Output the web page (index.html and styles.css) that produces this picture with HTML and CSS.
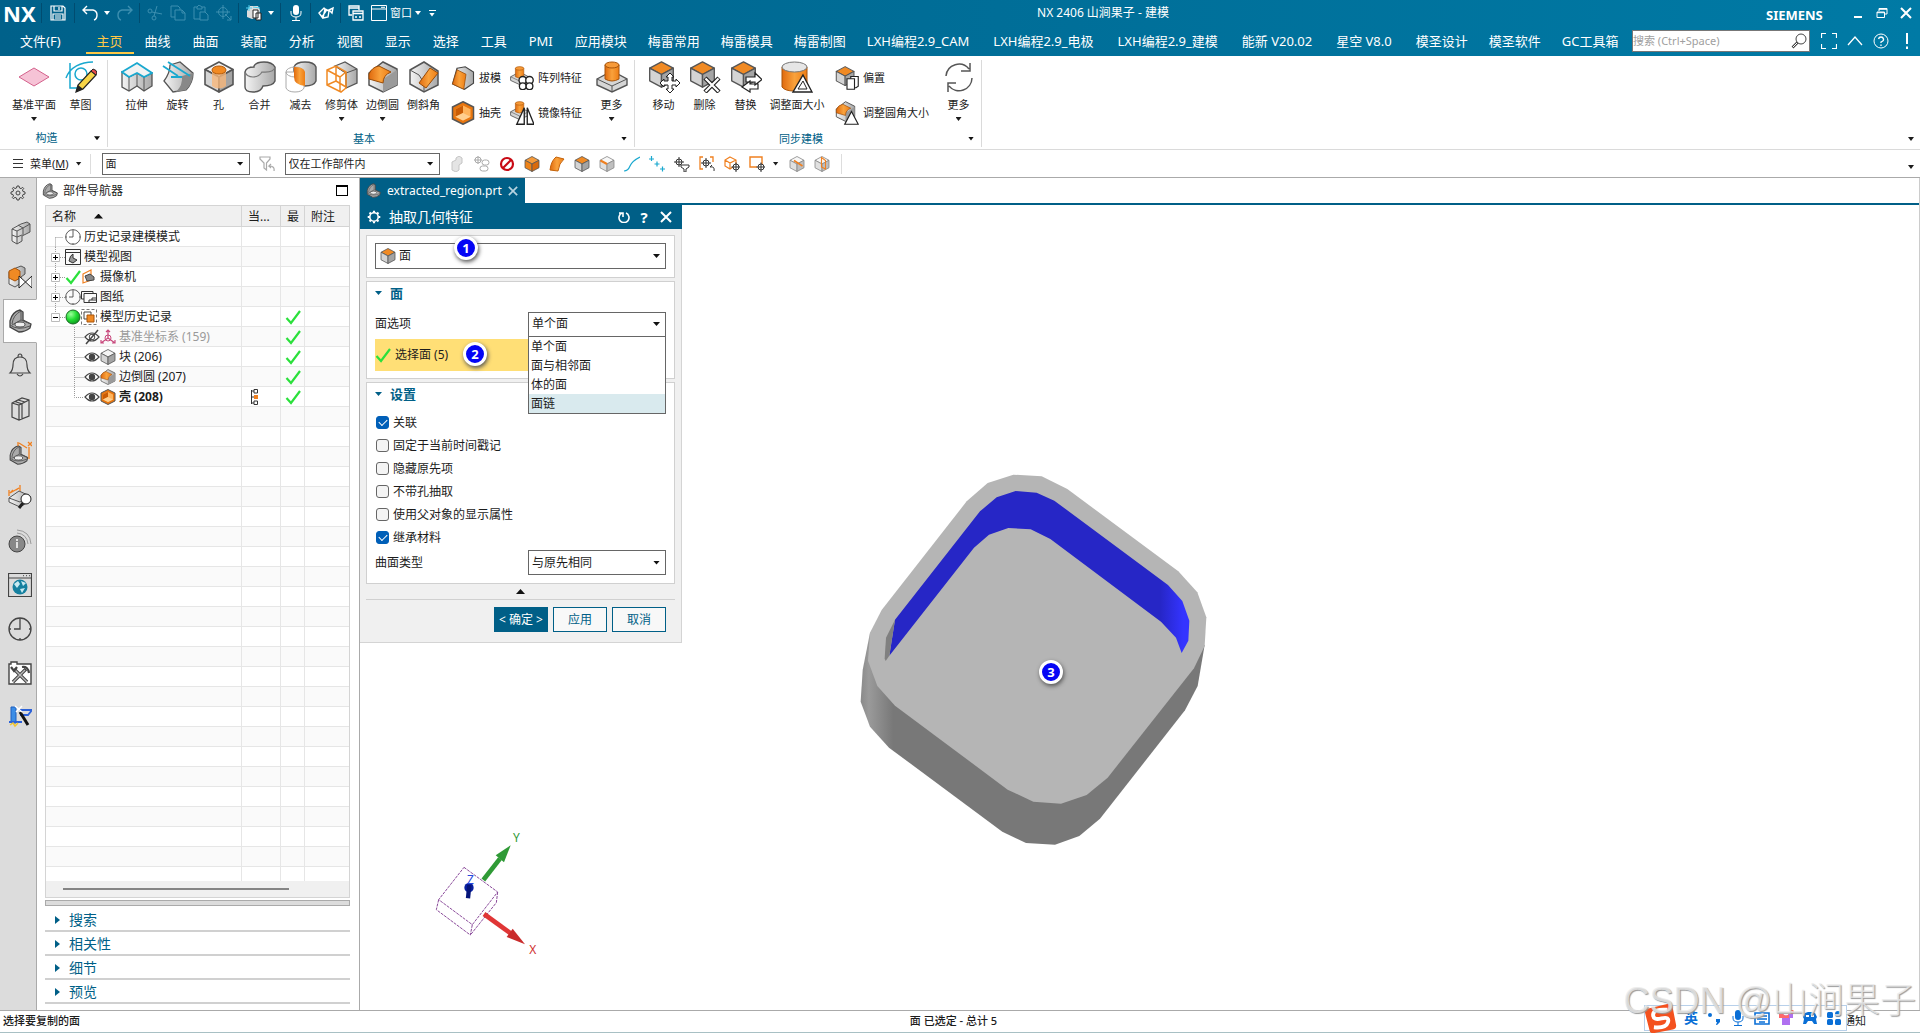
FILE: index.html
```html
<!DOCTYPE html>
<html lang="zh-CN">
<head>
<meta charset="utf-8">
<title>NX 2406 山涧果子 - 建模</title>
<link rel="stylesheet" href="styles.css">
</head>
<body>
<svg class="sprite" aria-hidden="true">
  <defs>
    <linearGradient id="gOr" x1="0" x2="1"><stop offset="0" stop-color="#e06a0e"/><stop offset=".5" stop-color="#f9a23c"/><stop offset="1" stop-color="#ee7d14"/></linearGradient>
    <linearGradient id="gGr" x1="0" x2="1"><stop offset="0" stop-color="#f4f4f4"/><stop offset="1" stop-color="#a8a8a8"/></linearGradient>
    <radialGradient id="gGreen" cx=".35" cy=".3" r=".8"><stop offset="0" stop-color="#9dff9d"/><stop offset=".5" stop-color="#22dd33"/><stop offset="1" stop-color="#0a8c1c"/></radialGradient>
  </defs>

  <symbol id="cube" viewBox="0 0 32 32"><g stroke="#555" stroke-width="1.6" stroke-linejoin="round"><path class="ft" d="M16 1 30 8.500 16 16 2 8.500Z"/><path class="fl" d="M2 8.500 16 16V31L2 23.500Z"/><path class="fr" d="M30 8.500 16 16V31L30 23.500Z"/></g></symbol>

  <symbol id="datum" viewBox="0 0 32 32"><path d="M1 16 16 7 31 16 16 25Z" fill="#f6c3d6" stroke="#d4628c"/></symbol>
  <symbol id="sketch" viewBox="0 0 32 32"><g fill="none" stroke="#19a8cf" stroke-width="1.500"><path d="M5 2V27H16M1 17C5 6 16 1 28 1"/><circle cx="16" cy="13" r="6"/></g><path d="M11 31 13 24 26 10 31 14 18 28Z" fill="#f8d548" stroke="#222" stroke-width="1.200"/><path d="M26 10 28 8Q32 9 32 12L31 14Z" fill="#e64a4a" stroke="#222"/><path d="M11 31 13 24 18 28Z" fill="#222"/></symbol>
  <symbol id="extrude" viewBox="0 0 32 32"><path d="M1 11V26L8 30 16 25 23 30 31 25V12L23 16 16 12 8 16Z" fill="url(#gGr)" stroke="#555" stroke-width="1.300"/><path d="M8 16V30M16 12V25M23 16V30" stroke="#555"/><path d="M1 11 16 2 31 12 23 16 16 12 8 16Z" fill="#f2f2f2" stroke="#19a8cf" stroke-width="1.800"/></symbol>
  <symbol id="revolve" viewBox="0 0 32 32"><path d="M8 4 18 1 31 12Q31 22 24 29L11 31 2 20Q8 12 8 4Z" fill="url(#gGr)" stroke="#555" stroke-width="1.300"/><path d="M14 31Q21 24 20 15L31 12Q31 22 24 29Z" fill="#888"/><path d="M1 5 16 15M6 1 28 15M9 16 20 16" stroke="#19a8cf" stroke-width="1.800"/></symbol>
  <symbol id="hole" viewBox="0 0 32 32"><use href="#cube"/><path d="M9 9V25Q16 30 23 25V9Z" fill="#f6b77a" opacity=".8"/><ellipse cx="16" cy="9" rx="7" ry="4" fill="#f28a22" stroke="#b55a08"/></symbol>
  <symbol id="unite" viewBox="0 0 32 32"><path d="M10 5Q12 1 20 1T31 6V20Q29 25 19 25 17 31 9 31T1 26V11Q2 6 10 6Z" fill="url(#gGr)" stroke="#555" stroke-width="1.400"/><path d="M1 11Q3 16 9 16T18 11Q30 12 31 6" fill="none" stroke="#777" stroke-width="1.200"/></symbol>
  <symbol id="subtract" viewBox="0 0 32 32"><path d="M9 6Q11 1 20 1T31 6V20Q29 25 20 25L9 20Z" fill="url(#gGr)" stroke="#555" stroke-width="1.400"/><path d="M1 11V27Q3 31 10 31T19 27V11Z" fill="#fff" stroke="#aaa"/><ellipse cx="10" cy="11" rx="9" ry="5" fill="none" stroke="#aaa"/><path d="M9 6Q19 6 20 11V25Q9 24 9 16Z" fill="url(#gOr)"/></symbol>
  <symbol id="trim" viewBox="0 0 32 32"><path d="M9 5 19 1 31 8V22L20 27V12Z" fill="url(#gGr)" stroke="#555" stroke-width="1.300"/><path d="M9 5 20 12 31 8" fill="none" stroke="#555"/><path d="M1 9 10 5 20 11V27L15 31 1 24ZM1 9 14 16V31M14 16 20 11M10 5V20L1 24M10 20 20 26" fill="none" stroke="#f08a24" stroke-width="1.500"/></symbol>
  <symbol id="blend" viewBox="0 0 32 32"><path d="M2 12 16 1 30 8V24L16 31 2 24Z" fill="url(#gGr)" stroke="#555" stroke-width="1.500"/><path d="M16 18 30 9V24L16 31Z" fill="#9a9a9a"/><path d="M2 13Q5 6 12 5L24 11Q16 14 16 22L2 18Z" fill="url(#gOr)" stroke="#9a4b06"/></symbol>
  <symbol id="chamfer" viewBox="0 0 32 32"><path d="M2 9 16 1 30 10V24L16 31 2 23Z" fill="url(#gGr)" stroke="#555" stroke-width="1.500"/><path d="M2 9 11 14 16 22V31" fill="none" stroke="#555"/><path d="M11 22 22 7 30 12 18 27Z" fill="url(#gOr)" stroke="#9a4b06"/></symbol>
  <symbol id="draft" viewBox="0 0 32 32"><path d="M8 3 19 1 30 8V23L18 31 2 24Z" fill="url(#gGr)" stroke="#444" stroke-width="1.500"/><path d="M8 5 20 11 17 31 2 24Z" fill="url(#gOr)" stroke="#9a4b06"/></symbol>
  <symbol id="shell" viewBox="0 0 32 32"><path d="M16 1 30 8V24L16 31 2 24V8Z" fill="#e8760f" stroke="#555" stroke-width="2"/><path d="M16 6 26 11V21L16 26 6 21V11Z" fill="#ffb45c"/><path d="M16 6V16L6 21V11Z" fill="#c95c05"/><path d="M6 21 16 16 26 21 16 26Z" fill="#ffcf8f"/></symbol>
  <symbol id="boss" viewBox="0 0 32 32"><path d="M1 18 16 10 31 18V24L16 31 1 24Z" fill="#d6d6d6" stroke="#555" stroke-width="1.400"/><path d="M1 18 16 25 31 18M16 25V31" fill="none" stroke="#555"/><path d="M9 4V18Q16 22 23 18V4Z" fill="url(#gOr)" stroke="#a8540a"/><ellipse cx="16" cy="4" rx="7" ry="3" fill="#f79a38" stroke="#a8540a"/></symbol>
  <symbol id="pattern" viewBox="0 0 32 32"><g transform="scale(.8)"><use href="#boss" width="32" height="32"/></g><g fill="#fff" stroke="#222" stroke-width="1.800"><circle cx="17" cy="19" r="5"/><circle cx="26" cy="19" r="5"/><circle cx="17" cy="27" r="4.500"/><circle cx="26" cy="27" r="4.500"/></g></symbol>
  <symbol id="mirror" viewBox="0 0 32 32"><g transform="scale(.8)"><use href="#boss" width="32" height="32"/></g><path d="M19 9V31H9ZM23 9V31H32Z" fill="#fff" stroke="#222" stroke-width="1.800"/></symbol>
  <symbol id="mv" viewBox="0 0 32 32"><use href="#cube" width="27" height="27"/><path d="M22 12 26 16H24V20H28V18L32 22 28 26V24H24V28H26L22 32 18 28H20V24H16V26L12 22 16 18V20H20V16H18Z" fill="#fff" stroke="#222"/></symbol>
  <symbol id="dl" viewBox="0 0 32 32"><use href="#cube" width="27" height="27"/><path d="M16 17 30 31M30 17 16 31" stroke="#222" stroke-width="4.500"/><path d="M16.500 17.500 29.500 30.500M29.500 17.500 16.500 30.500" stroke="#fff" stroke-width="2.200"/></symbol>
  <symbol id="rp" viewBox="0 0 32 32"><use href="#cube" width="27" height="27"/><path d="M16 16H25V12L32 18.500 25 24V21H16ZM28 23H20V20L12 26 20 31V28H28Z" fill="#fff" stroke="#222" stroke-width="1.200"/></symbol>
  <symbol id="resize" viewBox="0 0 32 32"><path d="M1 6V26Q4 30 13 30T26 26V6Z" fill="url(#gOr)" stroke="#a8540a"/><ellipse cx="13.500" cy="6" rx="12.500" ry="5" fill="#e6e6e6" stroke="#777"/><path d="M22 14 31 31H12Z" fill="#fff" stroke="#222" stroke-width="1.400"/><path d="M22 20 26 28H17Z" fill="#fff" stroke="#222"/></symbol>
  <symbol id="offset" viewBox="0 0 32 32"><use href="#cube" width="27" height="27"/><path d="M21 14H31V27L28 29H21Z" fill="#fff" stroke="#222" stroke-width="1.500"/><path d="M16 17H26V31H16Z" fill="#fff" stroke="#222" stroke-width="1.500"/></symbol>
  <symbol id="refillet" viewBox="0 0 32 32"><use href="#blend" width="28" height="28"/><path d="M22 14 31 31H13Z" fill="#fff" stroke="#222" stroke-width="1.600"/></symbol>
  <symbol id="cycle" viewBox="0 0 32 32"><path d="M3 15A13 13 0 0 1 26 8M29 17A13 13 0 0 1 6 25M27 2V10H18M5 31V22H13" fill="none" stroke="#555" stroke-width="1.500"/></symbol>

  <symbol id="save" viewBox="0 0 16 16"><path d="M1 1H13L15 3V15H1ZM4 1V6H12V1M9 2V5M3 15V9H13V15M5 11H11M5 13H11" fill="none" stroke="currentColor" stroke-width="1.200"/></symbol>
  <symbol id="undo" viewBox="0 0 16 16"><path d="M5 1 1 5 5 9M1 5H11Q15 6 15 10T12 15" fill="none" stroke="currentColor" stroke-width="1.400"/></symbol>
  <symbol id="redo" viewBox="0 0 16 16"><path d="M11 1 15 5 11 9M15 5H5Q1 6 1 10T4 15" fill="none" stroke="currentColor" stroke-width="1.400"/></symbol>
  <symbol id="cut" viewBox="0 0 16 16"><g fill="none" stroke="currentColor"><circle cx="3" cy="6" r="2"/><circle cx="7" cy="13" r="2"/><path d="M5 7 15 9M7 11 10 1"/></g></symbol>
  <symbol id="copy" viewBox="0 0 16 16"><path d="M5 12H1V1H8L10 3V5M5 5H12L15 8V15H5ZM12 5V8H15" fill="none" stroke="currentColor"/></symbol>
  <symbol id="paste" viewBox="0 0 16 16"><path d="M7 14H1V2H4V4H9V2H12V7M4 2 6 0 9 2M7 7H12L15 10V15H7Z" fill="none" stroke="currentColor"/></symbol>
  <symbol id="target" viewBox="0 0 16 16"><g fill="none" stroke="currentColor"><circle cx="7" cy="7" r="4.500"/><path d="M7 0V14M0 7H14M9 9 15 15V11M15 15H11"/></g></symbol>
  <symbol id="body" viewBox="0 0 16 16"><path d="M1 6 4 1 12 1 14 5 13 12 6 14 1 12Z" fill="#ddd"/><path d="M0 3H6M3 0V6M7 2 14 3" stroke="#4fd0f0"/><path d="M7 5H12V13H7ZM10 8H15V15H10Z" fill="#fff" stroke="#222"/></symbol>
  <symbol id="mic" viewBox="0 0 16 16"><rect x="5" y="0" width="6" height="10" rx="3" fill="currentColor"/><path d="M3 6V8Q3 12 8 12T13 8V6M8 12V15M4 15.500H12" fill="none" stroke="currentColor"/></symbol>
  <symbol id="touch" viewBox="0 0 16 16"><path d="M1 8 6 3 8 6 4 12ZM7 4 11 6 10 12 5 13ZM11 5 15 3 14 8Z" fill="none" stroke="currentColor" stroke-width="1.400"/></symbol>
  <symbol id="wins" viewBox="0 0 16 16"><path d="M4 10H1V1H11V5M1 3H11M5 6H15V15H5ZM5 8.500H15M7 12H9M11 12H13" fill="none" stroke="currentColor" stroke-width="1.300"/></symbol>
  <symbol id="win" viewBox="0 0 16 16"><path d="M.5.5H15.500V15.500H.5ZM.5 4H15.500M10 2.300H14" fill="none" stroke="currentColor"/></symbol>
  <symbol id="restore" viewBox="0 0 12 12"><path d="M3 4V1.500H11V7H8.500M1 5H8.500V10.500H1ZM3 2.300H11M1 5.700H8" fill="none" stroke="currentColor"/></symbol>
  <symbol id="close" viewBox="0 0 12 12"><path d="M1 1 11 11M11 1 1 11" stroke="currentColor" stroke-width="2"/></symbol>
  <symbol id="min" viewBox="0 0 12 12"><path d="M2 10H10" stroke="currentColor" stroke-width="2"/></symbol>
  <symbol id="lens" viewBox="0 0 16 16"><circle cx="10" cy="6" r="5" fill="none" stroke="#444"/><path d="M6.500 9.500 1.500 14.500" stroke="#444" stroke-width="2.600"/><path d="M6 10 2 14" stroke="#fff"/></symbol>
  <symbol id="full" viewBox="0 0 16 16"><path d="M.5 5V.5H5M11 .5H15.500V5M15.500 11V15.500H11M5 15.500H.5V11" fill="none" stroke="currentColor" stroke-width="1.200"/></symbol>
  <symbol id="chev" viewBox="0 0 16 16"><path d="M1 12 8 4 15 12" fill="none" stroke="currentColor" stroke-width="1.300"/></symbol>
  <symbol id="help" viewBox="0 0 16 16"><circle cx="8" cy="8" r="7" fill="none" stroke="currentColor"/><path d="M5.500 6Q6 4 8 4T10.500 6 8 9V10M8 11.500V13" fill="none" stroke="currentColor" stroke-width="1.300"/></symbol>
  <symbol id="bang" viewBox="0 0 16 16"><path d="M8 0V11M8 13.500V16" stroke="currentColor" stroke-width="2"/></symbol>

  <symbol id="menu" viewBox="0 0 10 10"><path d="M0 .5H10M0 4.500H10M0 8.500H10" stroke="#333"/></symbol>
  <symbol id="funnel" viewBox="0 0 16 16"><path d="M1 1H11V3L7.500 7V14L5 12V7L1 3ZM15 15Q16 10 10 10L12 8M10 10 12 12" fill="none" stroke="#aaa" stroke-width="1.200"/></symbol>
  <symbol id="ghost" viewBox="0 0 16 16"><path d="M3 6 7 4V2L10 0 13 2V7L10 9V14L7 16 3 14Z" fill="#e4e4e4" stroke="#c4c4c4"/></symbol>
  <symbol id="links" viewBox="0 0 16 16"><g fill="none" stroke="#aaa"><circle cx="4" cy="4" r="3"/><path d="M4 0V8M0 4H8"/><rect x="8" y="4" width="7" height="5" rx="2.500"/><rect x="6" y="10" width="8" height="5" rx="2.500"/></g></symbol>
  <symbol id="ban" viewBox="0 0 16 16"><circle cx="8" cy="8" r="6" fill="#fff" stroke="#c80a14" stroke-width="2.200"/><path d="M4 12 12 4" stroke="#c80a14" stroke-width="2.200"/></symbol>
  <symbol id="sheet" viewBox="0 0 16 16"><path d="M1 14Q2 5 7 1L15 3Q10 7 9 15Z" fill="url(#gOr)" stroke="#c46208"/></symbol>
  <symbol id="edge" viewBox="0 0 32 32"><g opacity=".7"><use href="#cube"/></g><path d="M3 9 16 16" stroke="#f08020" stroke-width="4"/></symbol>
  <symbol id="curve" viewBox="0 0 16 16"><path d="M0 15Q4 15 6 10T16 1" fill="none" stroke="#19a8cf" stroke-width="1.200"/></symbol>
  <symbol id="pts" viewBox="0 0 16 16"><path d="M0 3H5M2.500 0V5M5.500 8H10.500M8 5.500V10.500M11 13H16M13.500 10.500V15.500" stroke="#19a8cf" stroke-width="1.200"/></symbol>
  <symbol id="snapf" viewBox="0 0 16 16"><g fill="none" stroke="#333"><circle cx="5" cy="6" r="3"/><path d="M5 1V11M0 6H10"/><path d="M7 9H15V11L12 13V16H10V13L7 11Z" fill="#fff"/></g></symbol>
  <symbol id="snapb" viewBox="0 0 16 16"><path d="M4 1H1V13H4M11 1H14V6" fill="none" stroke="#f08020" stroke-width="1.300"/><g fill="none" stroke="#333"><circle cx="7" cy="7" r="3"/><path d="M7 2V12M2 7H12M15 15Q16 10 11 11L13 9"/></g></symbol>
  <symbol id="snapc" viewBox="0 0 16 16"><path d="M6 1 12 4V9L6 13 1 10V4ZM1 4 6 7 12 4M6 7V13" fill="none" stroke="#f08020" stroke-width="1.200"/><g fill="none" stroke="#333"><circle cx="12" cy="11" r="3" fill="#fff"/><path d="M12 6.500V16M7.500 11H16"/></g></symbol>
  <symbol id="snapr" viewBox="0 0 16 16"><path d="M8 11H1V1H13V8" fill="none" stroke="#f08020" stroke-width="1.400"/><g fill="none" stroke="#333"><circle cx="12" cy="11" r="3" fill="#fff"/><path d="M12 6.500V16M7.500 11H16"/></g></symbol>
  <symbol id="cut1" viewBox="0 0 32 32"><g opacity=".7"><use href="#cube"/></g><path d="M10 9 27 20" stroke="#f08020" stroke-width="3"/></symbol>
  <symbol id="cut2" viewBox="0 0 32 32"><g opacity=".7"><use href="#cube"/></g><path d="M15 3 23 9V26L15 22Z" fill="none" stroke="#f08020" stroke-width="2.200"/></symbol>

  <symbol id="gear" viewBox="0 0 16 16"><path d="M8 .8V3M8 13V15.200M.8 8H3M13 8H15.200M2.900 2.900 4.500 4.500M11.500 11.500 13.100 13.100M13.100 2.900 11.500 4.500M4.500 11.500 2.900 13.100" stroke="currentColor" stroke-width="2.400"/><circle cx="8" cy="8" r="4.800" fill="none" stroke="currentColor" stroke-width="1.800"/></symbol>
  <symbol id="cog" viewBox="0 0 16 16"><g fill="none" stroke="#444"><path d="M7 1H9L9.500 3 11 3.600 12.700 2.400 13.700 3.400 12.500 5 13 6.500 15 7V9L13 9.500 12.400 11 13.600 12.700 12.600 13.700 11 12.500 9.500 13 9 15H7L6.500 13 5 12.400 3.300 13.600 2.300 12.600 3.500 11 3 9.500 1 9V7L3 6.500 3.600 5 2.400 3.300 3.400 2.300 5 3.500 6.500 3Z"/><circle cx="8" cy="8" r="2"/></g></symbol>
  <symbol id="asm" viewBox="0 0 24 24"><path d="M4 8 13 3 19 1 22 3V11L14 15V20L9 23 4 20Z" fill="url(#gGr)" stroke="#555"/><path d="M4 8 9 10 15 7 22 3M9 10V23M15 7V14M4 14 9 16 14 14M10 4 15 7" fill="none" stroke="#555"/></symbol>
  <symbol id="constraint" viewBox="0 0 24 24"><path d="M8 3 13 1 17 3V9L13 12V18L7 22 1 19V7Z" fill="url(#gGr)" stroke="#555"/><path d="M1 6 7 3 12 6V13L7 16 1 13Z" fill="#f08a24" stroke="#a8540a"/><path d="M11 11V23L24 11V23Z" fill="#fff" stroke="#222"/></symbol>
  <symbol id="part" viewBox="0 0 24 24"><path d="M2 12Q4 3 12 1L15 3V11L23 15 22 19Q17 23 11 23L2 18Z" fill="#aaa" stroke="#444" stroke-width="1.300"/><path d="M4 15Q5 6 13 2V11L4 16M13 11 23 15M2 16Q10 22 22 17" fill="none" stroke="#555"/><ellipse cx="12" cy="15.500" rx="5" ry="2.500" fill="#eee" stroke="#444"/></symbol>
  <symbol id="bell" viewBox="0 0 24 24"><path d="M2 20Q5 17 5 12 5 4 12 4T19 12Q19 17 22 20ZM9 21Q12 25 15 21M10 4Q10 1 12 1T14 4" fill="none" stroke="#444" stroke-width="1.200"/></symbol>
  <symbol id="books" viewBox="0 0 24 24"><path d="M4 6 14 1 21 3V19L11 23 4 20ZM4 6 11 8 21 3M11 8V23M7 4.500 14 7V22M10 3 17 5" fill="none" stroke="#444" stroke-width="1.200"/></symbol>
  <symbol id="partdim" viewBox="0 0 24 24"><g transform="translate(0 4)"><use href="#part" width="21" height="20"/></g><path d="M10 1V5M11 2 19 7M21 6V18M20 1 24 5M24 1 20 5" stroke="#f08020" stroke-width="1.300"/></symbol>
  <symbol id="inspect" viewBox="0 0 24 24"><path d="M1 13 11 6 22 11V16L12 22 1 17Z" fill="url(#gGr)" stroke="#555"/><path d="M1 13 12 17 22 11" fill="none" stroke="#555"/><path d="M1 11V5M12 6V0M2 8 11 3M2 8 5 5M11 3 8 5" stroke="#f08020" stroke-width="1.300"/><circle cx="18" cy="14" r="5" fill="#fff" stroke="#222"/><path d="M15 18 11 23" stroke="#222" stroke-width="3"/></symbol>
  <symbol id="info" viewBox="0 0 24 24"><circle cx="9" cy="15" r="8" fill="#888" stroke="#444"/><path d="M9 10V12M9 13V19" stroke="#fff" stroke-width="1.500"/><path d="M9 4Q19 5 20 15M9 1Q22 2 23 15" fill="none" stroke="#999"/></symbol>
  <symbol id="web" viewBox="0 0 24 24"><path d="M.5.5H23.500V23.500H.5ZM.5 5H23.500" fill="none" stroke="#444" stroke-width="1.200"/><path d="M15 2.700H22" stroke="#444" stroke-dasharray="1 2"/><circle cx="12" cy="14" r="7.500" fill="#16809f"/><path d="M6 11 10 8 12 11 9 15ZM13 8 18 10 15 13ZM12 16 17 15 14 20Z" fill="#c8eaf2"/></symbol>
  <symbol id="clock" viewBox="0 0 24 24"><circle cx="12" cy="12" r="11" fill="none" stroke="#444" stroke-width="1.300"/><path d="M12 3V12H6M1 12H3M21 12H23M12 1V3M12 21V23" fill="none" stroke="#444" stroke-width="1.300"/></symbol>
  <symbol id="tools" viewBox="0 0 24 24"><path d="M1 3H3V1H9V3H23V23H1Z" fill="#fff" stroke="#444" stroke-width="1.400"/><path d="M6 8 19 21M18 8 5 21" stroke="#444" stroke-width="3.400"/><path d="M7 9 19 21M17 9 5 21" stroke="#bbb" stroke-width="1.400"/><path d="M3 6 6 10 9 6M14 6Q20 5 21 12" fill="none" stroke="#444" stroke-width="2.200"/></symbol>
  <symbol id="wiz" viewBox="0 0 24 24"><path d="M3 2H8V18H3Z" fill="#3b8de6" stroke="#1d5fc0"/><path d="M11 5H24L20 10H12M1 17H14" fill="none" stroke="#2d62d8" stroke-width="1.800"/><path d="M2 20 5 18 7 21 10 18" stroke="#f2c530" stroke-width="1.500" fill="none"/><path d="M12 7 20 20" stroke="#111" stroke-width="3"/><path d="M7 1 14 7M14 1 8 7" stroke="#fff" stroke-width="1.500"/></symbol>

  <symbol id="check" viewBox="0 0 16 16"><path d="M1.500 9 6 14 15 2" fill="none" stroke="#2be03c" stroke-width="2.200"/></symbol>
  <symbol id="mview" viewBox="0 0 16 16"><path d="M.5.5H15.500V15.500H.5ZM.5 3.500H15.500" fill="none" stroke="#333"/><path d="M4 12Q5 6 8 5V9L12 11 8 14Z" fill="#999" stroke="#333"/></symbol>
  <symbol id="cam" viewBox="0 0 16 16"><path d="M2 5 10 1V11L2 14Z" fill="none" stroke="#f08020" stroke-width="1.200"/><path d="M4 7 9 5 13 8V11L6 12Z" fill="#888" stroke="#444"/></symbol>
  <symbol id="draw" viewBox="0 0 16 16"><path d="M3 10H.5V2.500H12V5M3 4.500H15.500V13.500H3ZM8 13V11H15M11 11V9H15" fill="none" stroke="#333"/></symbol>
  <symbol id="hist" viewBox="0 0 16 16"><path d="M.5.5H15.500V15.500H.5Z" fill="none" stroke="#777" stroke-dasharray="3 2"/><path d="M3 3H10V10H3Z" fill="#fff" stroke="#444"/><path d="M6 6H13V13H6Z" fill="#f08a24" stroke="#a8540a"/></symbol>
  <symbol id="ball" viewBox="0 0 16 16"><circle cx="8" cy="8" r="7" fill="url(#gGreen)" stroke="#1b6b25"/></symbol>
  <symbol id="eye" viewBox="0 0 16 16"><path d="M1 8Q8 0 15 8 8 16 1 8Z" fill="#fff" stroke="#444" stroke-width="1.200"/><circle cx="8" cy="8" r="3.200" fill="#444"/></symbol>
  <symbol id="eyeoff" viewBox="0 0 16 16"><path d="M1 8Q8 0 15 8 8 16 1 8Z" fill="#fff" stroke="#444" stroke-width="1.200"/><circle cx="8" cy="8" r="2.800" fill="none" stroke="#444"/><path d="M2 15 14 1" stroke="#444" stroke-width="1.500"/></symbol>
  <symbol id="csys" viewBox="0 0 16 16"><path d="M8 1V9L1 14M8 9 15 14M6 3 8 1 10 3M1 11V14H4M12 14H15V11" fill="none" stroke="#c8487c" stroke-width="1.200"/><circle cx="8" cy="9" r="3" fill="none" stroke="#c8487c"/></symbol>
  <symbol id="seq" viewBox="0 0 8 16"><path d="M1.500 1V15M1.500 2H4M1.500 8H4M1.500 14H4M4 .5H7.500V4H4ZM4 12H7.500V15.500H4Z" fill="none" stroke="#333"/><path d="M4 6H8V10H4Z" fill="#f08020"/></symbol>

  <symbol id="g-first" viewBox="0 0 15 20"><path d="M5.500 10.500V20M5.500 10.500H13" class="dots"/></symbol>
  <symbol id="g-plus" viewBox="0 0 15 20"><path d="M5.500 0V20M10 10.500H15" class="dots"/><path d="M1.500 6.500H9.500V14.500H1.500Z" fill="#fff" stroke="#bbb"/><path d="M3 10.500H8M5.500 8V13" stroke="#000"/></symbol>
  <symbol id="g-minus" viewBox="0 0 15 20"><path d="M5.500 0V6M10 10.500H15" class="dots"/><path d="M1.500 6.500H9.500V14.500H1.500Z" fill="#fff" stroke="#bbb"/><path d="M3 10.500H8" stroke="#000"/></symbol>
  <symbol id="g-child" viewBox="0 0 34 20"><path d="M24.500 0V20M24.500 10.500H34" class="dots"/></symbol>
  <symbol id="g-end" viewBox="0 0 34 20"><path d="M24.500 0V10.500H34" class="dots"/></symbol>
</svg>

<div class="app">
  <header class="top">
    <div class="titlebar">
      <strong class="nx">NX</strong><i class="sep"></i>
      <button class="tb wide" aria-label="保存"><svg><use href="#save"/></svg></button><i class="sep"></i>
      <button class="tb" aria-label="撤消"><svg><use href="#undo"/></svg></button><button class="drop" aria-label="撤消列表"></button>
      <button class="tb off" aria-label="重做"><svg><use href="#redo"/></svg></button><i class="sep"></i>
      <button class="tb off" aria-label="剪切"><svg><use href="#cut"/></svg></button>
      <button class="tb off" aria-label="复制"><svg><use href="#copy"/></svg></button>
      <button class="tb off" aria-label="粘贴"><svg><use href="#paste"/></svg></button>
      <button class="tb off" aria-label="定位"><svg><use href="#target"/></svg></button><i class="sep"></i>
      <button class="tb" aria-label="重复命令"><svg><use href="#body"/></svg></button><button class="drop" aria-label="命令列表"></button><i class="sep"></i>
      <button class="tb" aria-label="语音"><svg><use href="#mic"/></svg></button><i class="sep"></i>
      <button class="tb" aria-label="触控模式"><svg><use href="#touch"/></svg></button><i class="sep"></i>
      <button class="tb" aria-label="切换窗口"><svg><use href="#wins"/></svg></button>
      <button class="tb" aria-label="窗口图标"><svg><use href="#win"/></svg></button>
      <button class="winlabel">窗口</button><button class="drop" aria-label="窗口列表"></button>
      <button class="drop bar" aria-label="自定义"></button>
      <h1>NX 2406 山涧果子 - 建模</h1>
      <strong class="brand">SIEMENS</strong>
      <button class="wc" aria-label="最小化"><svg><use href="#min"/></svg></button>
      <button class="wc" aria-label="还原"><svg><use href="#restore"/></svg></button>
      <button class="wc" aria-label="关闭"><svg><use href="#close"/></svg></button>
    </div>
    <div class="menurow">
      <nav class="tabs">
        <a class="file" href="#">文件(F)</a><a class="on" href="#">主页</a><a href="#">曲线</a><a href="#">曲面</a><a href="#">装配</a><a href="#">分析</a><a href="#">视图</a><a href="#">显示</a><a href="#">选择</a><a href="#">工具</a><a href="#">PMI</a><a class="n4" href="#">应用模块</a><a class="n4" href="#">梅雷常用</a><a class="n4" href="#">梅雷模具</a><a class="n4" href="#">梅雷制图</a><a class="mix" href="#">LXH编程2.9_CAM</a><a class="mix" href="#">LXH编程2.9_电极</a><a class="mix" href="#">LXH编程2.9_建模</a><a class="mix" href="#">能新 V20.02</a><a class="mix" href="#">星空 V8.0</a><a class="n4" href="#">模圣设计</a><a class="n4" href="#">模圣软件</a><a href="#">GC工具箱</a>
      </nav>
      <label class="search"><input type="text" placeholder="搜索 (Ctrl+Space)" aria-label="搜索"><svg><use href="#lens"/></svg></label>
      <button class="mi" aria-label="全屏"><svg><use href="#full"/></svg></button>
      <button class="mi" aria-label="最小化功能区"><svg><use href="#chev"/></svg></button>
      <button class="mi" aria-label="帮助"><svg><use href="#help"/></svg></button>
      <button class="mi" aria-label="提醒"><svg><use href="#bang"/></svg></button>
    </div>
  </header>

  <section class="ribbon">
    <div class="group">
      <div class="items">
        <button class="tool w50"><svg><use href="#datum"/></svg><span>基准平面</span><i class="tri"></i></button>
        <button class="tool"><svg><use href="#sketch"/></svg><span>草图</span></button>
      </div>
      <footer><span>构造</span><i class="tri"></i></footer>
    </div>
    <div class="group">
      <div class="items">
        <button class="tool"><svg><use href="#extrude"/></svg><span>拉伸</span></button>
        <button class="tool"><svg><use href="#revolve"/></svg><span>旋转</span></button>
        <button class="tool"><svg><use href="#hole"/></svg><span>孔</span></button>
        <button class="tool"><svg><use href="#unite"/></svg><span>合并</span></button>
        <button class="tool"><svg><use href="#subtract"/></svg><span>减去</span></button>
        <button class="tool"><svg><use href="#trim"/></svg><span>修剪体</span><i class="tri"></i></button>
        <button class="tool"><svg><use href="#blend"/></svg><span>边倒圆</span><i class="tri"></i></button>
        <button class="tool"><svg><use href="#chamfer"/></svg><span>倒斜角</span></button>
        <div class="stack">
          <button><svg><use href="#draft"/></svg>拔模</button>
          <button><svg><use href="#shell"/></svg>抽壳</button>
        </div>
        <div class="stack">
          <button><svg><use href="#pattern"/></svg>阵列特征</button>
          <button><svg><use href="#mirror"/></svg>镜像特征</button>
        </div>
        <button class="tool more"><svg><use href="#boss"/></svg><span>更多</span><i class="tri"></i></button>
      </div>
      <footer><span>基本</span><i class="tri"></i></footer>
    </div>
    <div class="group">
      <div class="items">
        <button class="tool otop"><svg><use href="#mv"/></svg><span>移动</span></button>
        <button class="tool otop"><svg><use href="#dl"/></svg><span>删除</span></button>
        <button class="tool otop"><svg><use href="#rp"/></svg><span>替换</span></button>
        <button class="tool w61"><svg><use href="#resize"/></svg><span>调整面大小</span></button>
        <div class="stack otop">
          <button><svg><use href="#offset"/></svg>偏置</button>
          <button><svg><use href="#refillet"/></svg>调整圆角大小</button>
        </div>
        <button class="tool more"><svg><use href="#cycle"/></svg><span>更多</span><i class="tri"></i></button>
      </div>
      <footer><span>同步建模</span><i class="tri"></i></footer>
    </div>
    <button class="ropt" aria-label="功能区选项"><i class="tri"></i></button>
  </section>

  <section class="selbar">
    <button class="menubtn"><svg><use href="#menu"/></svg><span>菜单(<u>M</u>)</span><i class="tri"></i></button>
    <i class="vsep"></i>
    <span class="select w148"><select aria-label="类型过滤器"><option>面</option></select></span>
    <button class="sb wide" aria-label="重置过滤器"><svg><use href="#funnel"/></svg></button>
    <span class="select w155"><select aria-label="选择范围"><option>仅在工作部件内</option></select></span>
    <div class="sicons">
      <button class="sb" aria-label="隐藏体"><svg><use href="#ghost"/></svg></button>
      <button class="sb" aria-label="链接"><svg><use href="#links"/></svg></button>
      <button class="sb" aria-label="取消"><svg><use href="#ban"/></svg></button>
      <button class="sb oall" aria-label="实体"><svg><use href="#cube"/></svg></button>
      <button class="sb" aria-label="片体"><svg><use href="#sheet"/></svg></button>
      <button class="sb otop" aria-label="面"><svg><use href="#cube"/></svg></button>
      <button class="sb" aria-label="边"><svg><use href="#edge"/></svg></button>
      <button class="sb" aria-label="曲线"><svg><use href="#curve"/></svg></button>
      <button class="sb" aria-label="点"><svg><use href="#pts"/></svg></button>
      <button class="sb" aria-label="捕捉过滤"><svg><use href="#snapf"/></svg></button>
      <button class="sb" aria-label="捕捉重置"><svg><use href="#snapb"/></svg></button>
      <button class="sb" aria-label="捕捉体"><svg><use href="#snapc"/></svg></button>
      <button class="sb" aria-label="矩形选择"><svg><use href="#snapr"/></svg></button>
      <button class="drop dark" aria-label="选择方式"></button>
      <button class="sb" aria-label="剖切"><svg><use href="#cut1"/></svg></button>
      <button class="sb" aria-label="编辑剖切"><svg><use href="#cut2"/></svg></button>
      <i class="vsep"></i>
    </div>
    <button class="ropt" aria-label="工具条选项"><i class="tri"></i></button>
  </section>

  <main class="work">
    <nav class="resbar">
      <button class="first" aria-label="设置"><svg><use href="#cog"/></svg></button>
      <button aria-label="装配导航器"><svg><use href="#asm"/></svg></button>
      <button aria-label="约束导航器"><svg><use href="#constraint"/></svg></button>
      <button class="on" aria-label="部件导航器"><svg><use href="#part"/></svg></button>
      <button aria-label="通知"><svg><use href="#bell"/></svg></button>
      <button aria-label="重用库"><svg><use href="#books"/></svg></button>
      <button aria-label="MBD 导航器"><svg><use href="#partdim"/></svg></button>
      <button aria-label="检查"><svg><use href="#inspect"/></svg></button>
      <button aria-label="信息"><svg><use href="#info"/></svg></button>
      <button aria-label="浏览器"><svg><use href="#web"/></svg></button>
      <button aria-label="历史记录"><svg><use href="#clock"/></svg></button>
      <button aria-label="加工向导"><svg><use href="#tools"/></svg></button>
      <button aria-label="角色"><svg><use href="#wiz"/></svg></button>
    </nav>

    <aside class="navi">
      <h2><svg><use href="#part"/></svg><span>部件导航器</span><button aria-label="停靠"></button></h2>
      <div class="treebox">
        <div class="rows">
          <table>
            <colgroup><col><col class="c2"><col class="c3"><col class="c4"></colgroup>
            <thead><tr><th>名称<i class="up"></i></th><th>当...</th><th>最</th><th>附注</th></tr></thead>
            <tbody>
              <tr><td><div><svg class="g"><use href="#g-first"/></svg><svg><use href="#clock"/></svg><span>历史记录建模模式</span></div></td><td></td><td></td><td></td></tr>
              <tr><td><div><svg class="g"><use href="#g-plus"/></svg><svg><use href="#mview"/></svg><span>模型视图</span></div></td><td></td><td></td><td></td></tr>
              <tr><td><div><svg class="g"><use href="#g-plus"/></svg><svg><use href="#check"/></svg><svg><use href="#cam"/></svg><span>摄像机</span></div></td><td></td><td></td><td></td></tr>
              <tr><td><div><svg class="g"><use href="#g-plus"/></svg><svg><use href="#clock"/></svg><svg><use href="#draw"/></svg><span>图纸</span></div></td><td></td><td></td><td></td></tr>
              <tr><td><div><svg class="g"><use href="#g-minus"/></svg><svg><use href="#ball"/></svg><svg><use href="#hist"/></svg><span>模型历史记录</span></div></td><td></td><td><svg><use href="#check"/></svg></td><td></td></tr>
              <tr class="dim"><td><div><svg class="g2"><use href="#g-child"/></svg><svg><use href="#eyeoff"/></svg><svg><use href="#csys"/></svg><span>基准坐标系 (159)</span></div></td><td></td><td><svg><use href="#check"/></svg></td><td></td></tr>
              <tr><td><div><svg class="g2"><use href="#g-child"/></svg><svg><use href="#eye"/></svg><svg><use href="#cube"/></svg><span>块 (206)</span></div></td><td></td><td><svg><use href="#check"/></svg></td><td></td></tr>
              <tr><td><div><svg class="g2"><use href="#g-child"/></svg><svg><use href="#eye"/></svg><svg><use href="#blend"/></svg><span>边倒圆 (207)</span></div></td><td></td><td><svg><use href="#check"/></svg></td><td></td></tr>
              <tr class="cur"><td><div><svg class="g2"><use href="#g-end"/></svg><svg><use href="#eye"/></svg><svg><use href="#shell"/></svg><span>壳 (208)</span></div></td><td><svg class="seq"><use href="#seq"/></svg></td><td><svg><use href="#check"/></svg></td><td></td></tr>
              <tr><td></td><td></td><td></td><td></td></tr>
              <tr><td></td><td></td><td></td><td></td></tr>
              <tr><td></td><td></td><td></td><td></td></tr>
              <tr><td></td><td></td><td></td><td></td></tr>
              <tr><td></td><td></td><td></td><td></td></tr>
              <tr><td></td><td></td><td></td><td></td></tr>
              <tr><td></td><td></td><td></td><td></td></tr>
              <tr><td></td><td></td><td></td><td></td></tr>
              <tr><td></td><td></td><td></td><td></td></tr>
              <tr><td></td><td></td><td></td><td></td></tr>
              <tr><td></td><td></td><td></td><td></td></tr>
              <tr><td></td><td></td><td></td><td></td></tr>
              <tr><td></td><td></td><td></td><td></td></tr>
              <tr><td></td><td></td><td></td><td></td></tr>
              <tr><td></td><td></td><td></td><td></td></tr>
              <tr><td></td><td></td><td></td><td></td></tr>
              <tr><td></td><td></td><td></td><td></td></tr>
              <tr><td></td><td></td><td></td><td></td></tr>
              <tr><td></td><td></td><td></td><td></td></tr>
              <tr><td></td><td></td><td></td><td></td></tr>
              <tr><td></td><td></td><td></td><td></td></tr>
              <tr><td></td><td></td><td></td><td></td></tr>
              <tr><td></td><td></td><td></td><td></td></tr>
              <tr><td></td><td></td><td></td><td></td></tr>
            </tbody>
          </table>
        </div>
        <div class="hscroll"><i></i></div>
      </div>
      <div class="splitter"></div>
      <button class="fold">搜索</button>
      <button class="fold">相关性</button>
      <button class="fold">细节</button>
      <button class="fold">预览</button>
    </aside>

    <section class="view">
      <div class="doctabs">
        <div class="doc"><svg><use href="#part"/></svg><span>extracted_region.prt</span><button aria-label="关闭文件"><svg><use href="#close"/></svg></button></div>
      </div>
      <div class="canvas">
        <svg class="scene" aria-label="壳体零件">
          <defs>
            <linearGradient id="side" gradientUnits="userSpaceOnUse" x1="62" y1="0" x2="160" y2="0"><stop offset="0" stop-color="#8a8a8a"/><stop offset=".25" stop-color="#9a9a9a"/><stop offset="1" stop-color="#787878"/></linearGradient>
            <linearGradient id="wall" gradientUnits="userSpaceOnUse" x1="960" y1="0" x2="1030" y2="0"><stop offset="0" stop-color="#2626c6"/><stop offset="1" stop-color="#3434ff"/></linearGradient>
          </defs>
          <g transform="translate(480 245) scale(.33333)">
            <path fill="url(#side)" d="M90 548 68 660 62 755 90 830 147 893 487 1145 558 1179 645 1184 718 1158 780 1106 1035 781 1073 708 1094 585 600 500Z"/>
            <path fill="#b5b5b5" d="M520 74 605 79 682 117 1015 364 1072 427 1099 502 1094 588 1062 655 803 983 740 1035 663 1061 580 1055 503 1019 165 767 112 708 84 632 90 548 125 480 380 154 443 99Z"/>
            <path fill="url(#wall)" d="M527 123 590 128 643 152 984 405 1027 453 1048 512 1045 572 1025 609 1008 563 963 515 631 267 572 238 505 234 447 254 402 293 148 617 165 509 420 184 470 142Z"/>
            <path fill="#808080" d="M165 509 148 617 137 633 134 626 138 563Z"/>
          </g>
          <g transform="translate(40 605) scale(.33333)">
            <g fill="none" stroke="#8a4a9a" stroke-width="3" stroke-dasharray="9 3"><path d="M192 172 293 246 217 344 116 269ZM116 269 109 299 211 375 217 344M293 246 289 278 211 375"/></g>
            <path d="M250 210 300 146" stroke="#2f9a36" stroke-width="14"/><path d="M332 106 287 136 312 157Z" fill="#2f9a36"/>
            <path d="M252 312 332 370" stroke="#e03636" stroke-width="14"/><path d="M375 403 338 356 320 381Z" fill="#c92c2c"/>
            <circle cx="207" cy="233" r="14" fill="#0a20a0"/><path d="M208 225 204 265" stroke="#04147a" stroke-width="13"/>
            <text x="201" y="223" class="ax z">Z</text><text x="339" y="95" class="ax y">Y</text><text x="388" y="433" class="ax x">X</text>
          </g>
        </svg>
        <span class="badge b3">3</span>

        <form class="dialog">
          <header><svg><use href="#gear"/></svg><h3>抽取几何特征</h3><button type="button" aria-label="重置"><svg viewBox="0 0 12 12"><path d="M4 2A5 5 0 1 0 8 2M1 2H5V6" fill="none" stroke="currentColor" stroke-width="1.600"/></svg></button><button type="button" aria-label="帮助" class="q">?</button><button type="button" aria-label="关闭"><svg><use href="#close"/></svg></button></header>
          <div class="dbody">
            <fieldset class="kind otop">
              <span class="select tall"><svg><use href="#cube"/></svg><select aria-label="类型"><option>面</option></select></span>
              <span class="badge b1">1</span>
            </fieldset>
            <fieldset>
              <h4>面</h4>
              <div class="row"><label for="fopt">面选项</label>
                <span class="select w138"><select id="fopt"><option>单个面</option></select>
                  <ul class="list" role="listbox"><li>单个面</li><li>面与相邻面</li><li>体的面</li><li class="hot">面链</li></ul></span></div>
              <div class="pick"><svg><use href="#check"/></svg><span>选择面 (5)</span><span class="badge b2">2</span></div>
            </fieldset>
            <fieldset class="setting">
              <h4>设置</h4>
              <label class="ck"><input type="checkbox" checked>关联</label>
              <label class="ck"><input type="checkbox">固定于当前时间戳记</label>
              <label class="ck"><input type="checkbox">隐藏原先项</label>
              <label class="ck"><input type="checkbox">不带孔抽取</label>
              <label class="ck"><input type="checkbox">使用父对象的显示属性</label>
              <label class="ck"><input type="checkbox" checked>继承材料</label>
              <div class="row"><label for="stype">曲面类型</label><span class="select w138"><select id="stype"><option>与原先相同</option></select></span></div>
            </fieldset>
            <button type="button" class="collapse" aria-label="折叠"><i class="up"></i></button>
            <div class="actions"><button type="button" class="ok">&lt; 确定 &gt;</button><button type="button">应用</button><button type="button">取消</button></div>
          </div>
        </form>
      </div>
    </section>
  </main>

  <footer class="status"><span>选择要复制的面</span><span class="mid">面 已选定 - 总计 5</span><span class="note">通知</span></footer>

  <div class="ime">
    <svg class="logo" viewBox="0 0 32 32"><path d="M5 4 26 2Q30 2 30 6L31 25Q31 29 27 29L7 30Q3 30 3 26L1 8Q1 4 5 4Z" fill="#f4511e"/><path d="M24 8Q10 5 9 11T17 16 23 21 8 24" fill="none" stroke="#fff" stroke-width="4"/></svg>
    <b>英</b>
    <svg viewBox="0 0 16 16"><circle cx="4" cy="5" r="2"/><path d="M10 9H14V12L11 15H10L11 12H10Z"/></svg>
    <svg viewBox="0 0 16 16"><use href="#mic"/></svg>
    <svg viewBox="0 0 16 16"><path d="M1 3H15V14H1ZM3 6H13M3 9H13M5 12H11" fill="none" stroke="currentColor" stroke-width="1.600"/></svg>
    <svg viewBox="0 0 16 16"><path d="M1 4H5Q8 7 11 4H15V8H12V15H4V8H1Z" fill="#b070f0"/><path d="M1 4H5Q8 7 11 4V8H1Z" fill="#ff6a6a"/><circle cx="14" cy="2" r="2" fill="#ff4a3a"/></svg>
    <svg viewBox="0 0 16 16"><path d="M1 7 3 3 6 2H10L13 3 15 7 14 9 15 14H12L10 11H6L4 14H1L2 9Z"/><path d="M4 6H7M9 6H12" stroke="#fff" stroke-width="2"/></svg>
    <svg viewBox="0 0 16 16"><rect x="1" y="2" width="6" height="6" rx="1.500"/><rect x="9" y="1" width="6" height="6" rx="3"/><rect x="1" y="9" width="6" height="6" rx="1.500"/><rect x="9" y="9" width="6" height="6" rx="1.500"/></svg>
  </div>
  <div class="mark">CSDN @山涧果子</div>
</div>
</body>
</html>
```
FILE: styles.css
```css
:root {
  --blue: #005f87;
  --ink: #1c1c1c;
  --line: #aaa;
  --t: #f4f4f4;
  --l: #d4d4d4;
  --r: #a4a4a4;
}
* { box-sizing: border-box; }
body {
  margin: 0;
  font: 12px/16px "Noto Sans", "Noto Sans CJK SC", sans-serif;
  color: var(--ink);
  background: #fff;
}
h1, h2, h3, h4, ul, fieldset, form { margin: 0; padding: 0; font-weight: normal; }
button {
  display: flex;
  align-items: center;
  justify-content: center;
  flex: none;
  border: 0;
  padding: 0;
  background: none;
  font: inherit;
  color: inherit;
  white-space: nowrap;
}
svg { flex: none; display: block; }
.sprite { position: absolute; width: 0; height: 0; }
.ft { fill: var(--t); }
.fl { fill: var(--l); }
.fr { fill: var(--r); }
.dots { fill: none; stroke: #999; stroke-dasharray: 1 1; }
.otop { --t: #f08a24; }
.oall { --t: #f59a3a; --l: #ee8318; --r: #d96a0c; }

.app { position: relative; display: flex; flex-direction: column; height: 100vh; overflow: hidden; }

/* triangles */
.tri, .drop::after { width: 6px; height: 4px; background: currentColor; clip-path: polygon(0 0, 100% 0, 50% 100%); }
.up { width: 9px; height: 5px; background: #111; clip-path: polygon(50% 0, 100% 100%, 0 100%); }
.drop { width: 12px; height: 20px; }
.drop::after { content: ""; }
.drop.bar { width: 16px; flex-direction: column; gap: 2px; }
.drop.bar::before { content: ""; width: 7px; height: 1px; background: #fff; }

/* title */
.top { flex: none; color: #fff; background: linear-gradient(90deg, #00618a, #007aa5); }
.titlebar { display: flex; align-items: center; height: 26px; }
.nx { width: 38px; padding-left: 3px; font-size: 22px; line-height: 26px; }
.sep { flex: none; width: 1px; height: 20px; margin: 0 3px; background: #004c70; }
.tb { width: 23px; height: 24px; }
.tb.wide { width: 26px; }
.tb svg, .mi svg { width: 16px; height: 16px; }
.off { color: #3c8fb0; }
.winlabel { width: 22px; font-size: 11px; }
.titlebar h1 { flex: 1; text-align: center; font-size: 12px; }
.brand { width: 80px; font-size: 13px; padding-top: 3px; }
.wc { width: 24px; height: 24px; }
.wc svg { width: 12px; height: 12px; }
.wc:last-child { margin-right: 2px; }
.menurow { display: flex; align-items: center; height: 30px; }
.tabs { display: flex; flex: 1; height: 30px; }
.tabs a { flex: none; padding: 0 11px; font-size: 13px; line-height: 30px; color: #fff; text-decoration: none; }
.tabs a.file { padding: 0 25px 0 20px; }
.tabs a.n4 { padding: 0 10px 0 11px; }
.tabs a.mix { padding: 0 13px 0 11px; }
.tabs a.on { color: #ffc845; background: linear-gradient(#ffc845, #ffc845) 0 26px / 100% 2px no-repeat; }
.search { display: flex; align-items: center; flex: none; width: 178px; height: 22px; margin-right: 6px; padding-right: 2px; background: #fff; border: 1px solid #777; }
.search input { flex: 1; min-width: 0; border: 0; padding: 0; font: inherit; font-size: 11px; outline: 0; }
.search input::placeholder { color: #a0a0a0; }
.search svg { width: 16px; height: 16px; }
.mi { width: 26px; height: 26px; }

/* ribbon */
.ribbon { display: flex; flex: none; height: 94px; padding-top: 4px; border-bottom: 1px solid #dadada; font-size: 11px; }
.group { display: flex; flex-direction: column; flex: none; position: relative; padding: 0 2px 0 8px; border-right: 1px solid #dadada; margin-bottom: 2px; }
.items { display: flex; height: 71px; }
.tool { flex-direction: column; justify-content: flex-start; width: 41px; padding-top: 1px; }
.tool svg { width: 32px; height: 32px; margin-bottom: 4px; }
.tool .tri { margin-top: 4px; }
.w50 { width: 52px; }
.w61 { width: 62px; }
.group:first-child { padding-right: 6px; }
.stack { display: flex; flex-direction: column; margin-left: 7px; }
.stack button { height: 35px; gap: 4px; justify-content: flex-start; }
.stack svg { width: 24px; height: 24px; }
.stack + .stack { margin-left: 9px; }
.more { margin-left: 9px; }
.group footer { display: flex; align-items: center; height: 18px; margin-left: -8px; color: var(--blue); }
.group footer span { flex: 1; text-align: center; padding-right: 1px; }
.group footer .tri { color: #111; margin-right: 5px; }
.group:first-child footer { margin-right: -4px; }
.ropt { align-self: flex-end; width: 10px; height: 20px; margin: 0 4px 0 auto; }

/* selection bar */
.selbar { display: flex; align-items: center; flex: none; height: 28px; border-bottom: 1px solid var(--line); font-size: 11px; }
.menubtn { gap: 7px; padding-left: 13px; height: 24px; }
.menubtn svg { width: 10px; height: 10px; }
.vsep { flex: none; width: 1px; height: 20px; margin: 0 11px 0 8px; background: #ddd; }
.select { position: relative; display: flex; align-items: center; flex: none; height: 22px; border: 1px solid #666; background: #fff; }
.select::after { content: ""; position: absolute; right: 5px; width: 7px; height: 4px; background: #111; clip-path: polygon(0 0, 100% 0, 50% 100%); }
.select select { flex: 1; min-width: 0; height: 100%; padding: 0 16px 0 3px; border: 0; appearance: none; background: transparent; font: inherit; color: inherit; }
.w148 { width: 148px; }
.w155 { width: 155px; }
.sb { width: 25px; height: 24px; }
.sb.wide { width: 35px; }
.sb svg { width: 16px; height: 16px; }
.sicons { display: flex; align-items: center; margin-left: 5px; }
.sicons .drop { margin-right: 3px; }
.sicons .vsep { margin-left: 6px; }

/* work area */
.work { display: flex; flex: 1; min-height: 0; }
.resbar { flex: none; width: 37px; background: #dcdcdc; border-right: 1px solid var(--line); }
.resbar button { width: 37px; height: 44px; padding-left: 3px; }
.resbar svg { width: 24px; height: 24px; }
.resbar .first { height: 33px; padding: 0 5px 3px 3px; }
.resbar .first svg { width: 16px; height: 16px; }
.resbar .on { width: 34px; margin-left: 3px; padding: 0; background: #fff; border: 1px solid var(--line); border-right-color: #fff; }

.navi { display: flex; flex-direction: column; flex: none; width: 323px; padding: 0 9px 6px 8px; border-right: 1px solid var(--line); }
.navi h2 { display: flex; align-items: center; gap: 5px; height: 27px; padding: 0 2px 2px 0; font-size: 12px; margin-left: -3px; }
.navi h2 svg { width: 16px; height: 16px; }
.navi h2 button { width: 12px; height: 11px; margin-left: auto; border: 1px solid #000; border-top-width: 2px; }
.treebox { display: flex; flex-direction: column; flex: 1; min-height: 0; border: 1px solid #d4d4d4; }
.rows { flex: 1; min-height: 0; overflow: hidden; }
table { width: 100%; border-collapse: separate; border-spacing: 0; table-layout: fixed; }
.c2 { width: 39px; }
.c3 { width: 24px; }
.c4 { width: 44px; }
th, td { height: 20px; padding: 0; border-right: 1px solid #e6e6e6; border-bottom: 1px solid #e6e6e6; line-height: 19px; white-space: nowrap; }
th:last-child, td:last-child { border-right: 0; }
th { height: 21px; padding-left: 6px; background: #f0f0f0; border-color: #d4d4d4; font-weight: normal; text-align: left; }
th .up { display: inline-block; margin: 0 0 2px 18px; }
tbody tr:nth-child(even) { background: #fafafa; }
td div { display: flex; align-items: center; height: 19px; padding-left: 4px; }
td svg { width: 16px; height: 16px; }
td svg.g { width: 15px; height: 20px; }
td svg.g2 { width: 34px; height: 20px; }
td > svg { margin: 0 auto; }
td svg.seq { width: 8px; margin-left: 8px; }
td span { padding-left: 3px; }
.dim span { color: #999; }
.cur td div { font-weight: bold; }
.hscroll { flex: none; height: 16px; padding: 7px 60px 0 17px; background: #f0f0f0; }
.hscroll i { display: block; height: 2px; background: #858585; }
.splitter { flex: none; height: 6px; margin: 2px 0; background: #dcdcdc; border: 1px solid var(--line); }
.fold { justify-content: flex-start; gap: 9px; height: 24px; padding: 2px 0 0 10px; border-bottom: 2px solid #d0d0d0; font-size: 14px; color: var(--blue); }
.fold::before { content: ""; width: 5px; height: 8px; background: var(--blue); clip-path: polygon(0 0, 100% 50%, 0 100%); }

/* graphics window */
.view { display: flex; flex-direction: column; flex: 1; min-width: 0; border-right: 1px solid #ccc; }
.doctabs { display: flex; flex: none; height: 27px; border-bottom: 2px solid var(--blue); }
.doc { display: flex; align-items: center; gap: 6px; padding: 0 7px 0 6px; color: #fff; background: var(--blue); }
.doc svg { width: 15px; height: 15px; }
.doc button svg { width: 10px; height: 10px; color: #b8d4e0; }
.canvas { position: relative; flex: 1; min-height: 0; }
.scene { position: absolute; inset: 0; width: 100%; height: 100%; }
.ax { font: 36px "Noto Sans", sans-serif; }
.z { fill: #2848e0; }
.y { fill: #2f9a36; }
.x { fill: #d03030; }
.badge { position: absolute; width: 24px; height: 24px; border: 3px solid #fff; border-radius: 50%; background: #0505f5; color: #fff; font: bold 13px/18px "Noto Sans", sans-serif; text-align: center; box-shadow: 1px 2px 4px #555; }
.b1 { left: 87px; top: 0; }
.b2 { left: 88px; top: 3px; }
.b3 { left: 679px; top: 455px; }

/* dialog */
.dialog { position: relative; width: 322px; background: #f0f0f0; border-right: 1px solid #d4d4d4; border-bottom: 1px solid #d4d4d4; }
.dialog header { display: flex; align-items: center; height: 24px; padding: 0 9px 0 7px; margin-right: -1px; color: #fff; background: var(--blue); }
.dialog header > svg { width: 14px; height: 14px; }
.dialog h3 { flex: 1; padding-left: 8px; font-size: 14px; }
.dialog header button { width: 18px; height: 20px; margin-left: 2px; }
.dialog header button svg { width: 12px; height: 12px; }
.dialog header button:last-child { margin-left: 6px; width: 14px; }
.q { font-size: 15px; font-weight: bold; }
.dbody { display: flex; flex-direction: column; gap: 3px; padding: 6px 6px 10px 6px; }
fieldset { position: relative; min-width: 0; border: 1px solid #d0d0d0; padding: 0 8px 7px; background: #fff; }
.kind { padding: 7px 8px 8px; }
.tall { height: 26px; padding-left: 4px; }
.tall svg { width: 16px; height: 16px; }
h4 { display: flex; align-items: center; gap: 8px; height: 27px; padding-bottom: 5px; font-size: 13px; font-weight: bold; color: var(--blue); }
h4::before { content: ""; width: 7px; height: 4px; background: var(--blue); clip-path: polygon(0 0, 100% 0, 50% 100%); }
.row { display: flex; align-items: center; justify-content: space-between; height: 30px; }
.row .select { height: 25px; }
.w138 { width: 138px; }
.list { position: absolute; z-index: 2; left: -1px; right: -1px; top: 23px; border: 1px solid #666; background: #fff; list-style: none; }
.list li { height: 19px; padding-left: 2px; line-height: 19px; }
.list .hot { background: #d9eaee; }
.pick { position: relative; display: flex; align-items: center; gap: 4px; height: 32px; padding-bottom: 1px; background: #ffdf76; }
.pick svg { width: 16px; height: 16px; }
.ck { display: flex; align-items: center; gap: 4px; height: 23px; }
.ck input { appearance: none; width: 13px; height: 13px; margin: 0 0 0 1px; border: 1px solid #666; border-radius: 3px; background: #f4f4f4; }
.ck input:checked { border-color: #005fb8; background: #005fb8; }
.ck input:checked::before { content: ""; display: block; width: 7px; height: 4px; margin: 2px; border: solid #fff; border-width: 0 0 1px 1px; transform: rotate(-45deg); }
.setting h4 { height: 28px; padding-bottom: 6px; }
.setting .row { height: 27px; }
.collapse { height: 9px; }
.actions { display: flex; justify-content: flex-end; gap: 5px; padding: 7px 9px 0 0; border-top: 1px solid #d0d0d0; }
.actions button { width: 54px; height: 25px; border: 1px solid var(--blue); color: var(--blue); background: #f8f8f8; }
.actions .ok { color: #fff; background: var(--blue); }

/* status */
.status { display: grid; grid-template-columns: 1fr auto 1fr; align-items: center; flex: none; height: 23px; padding: 0 16px 2px 3px; border-top: 1px solid var(--line); border-bottom: 1px solid #a8c0c4; font-size: 11px; font-weight: 500; }
.status .note { padding-right: 38px; text-align: right; font-weight: normal; }

.ime { position: absolute; right: 73px; bottom: 2px; display: flex; align-items: center; gap: 8px; height: 26px; padding-right: 4px; border: 1px solid #b8d0ea; background: #fff; color: #0a6fd6; fill: #0a6fd6; }
.ime svg { width: 16px; height: 16px; }
.ime .logo { width: 31px; height: 31px; transform: rotate(-8deg); }
.ime b { font-size: 14px; }
.mark { position: absolute; right: 4px; bottom: 12px; font: 36px/40px "Liberation Sans", "Noto Sans CJK SC", sans-serif; font-weight: 300; color: rgba(235, 235, 235, .8); text-shadow: 1px 1px 1px #999; }
```
